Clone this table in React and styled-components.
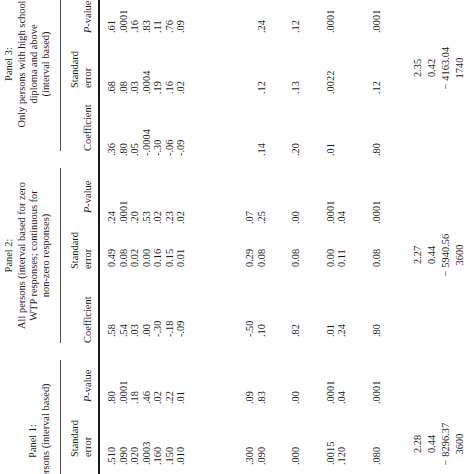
import React from "react";
import styled, { createGlobalStyle } from "styled-components";

const GlobalStyle = createGlobalStyle`
  html, body { margin: 0; padding: 0; background: #fff; overflow: hidden; }
`;

const Stage = styled.div`
  width: 474px;
  height: 474px;
  overflow: hidden;
  background: #fff;
`;

/* The printed table is turned a quarter turn counter-clockwise in the picture. */
const Sheet = styled.div`
  width: 537px;
  transform-origin: 0 0;
  transform: translate(0, 510px) rotate(-90deg);
  font-family: "Liberation Serif", "Times New Roman", serif;
  font-size: 10.4px;
  line-height: 12px;
  color: #1a1a1a;
`;

const TitleRow = styled.div`
  display: grid;
  grid-template-columns: 167px 192px 178px;
  align-items: end;
  padding-top: 3px;
`;

const PanelTitle = styled.div`
  margin-right: ${(p) => p.$gap}px;
  padding-right: ${(p) => p.$pad}px;
  padding-bottom: 8px;
  border-bottom: 1px solid #4a4a4a;
  text-align: center;
  white-space: nowrap;
`;

const PanelName = styled.div`
  margin-bottom: 1px;
`;

const headTemplate = "53px 55px 59px 74px 56px 62px 63px 55px 60px";
const bodyTemplate = "45px 61px 67px 70px 43px 68px 62px 61px 60px";

const ColumnHeadRow = styled.div`
  display: grid;
  grid-template-columns: ${headTemplate};
  align-items: end;
  padding: 7px 0 4px;
  line-height: 13px;
  border-bottom: 2px solid #1a1a1a;
`;

const ColumnHead = styled.div`
  white-space: nowrap;
`;

const Body = styled.div`
  padding-top: 6px;
`;

const DataRow = styled.div`
  display: grid;
  grid-template-columns: ${bodyTemplate};
  height: 11.5px;
  line-height: 11.5px;
  margin-top: ${(p) => p.$gap * 11.5}px;
`;

const Cell = styled.div`
  white-space: nowrap;
`;

const StatsRow = styled.div`
  display: grid;
  grid-template-columns: 167px 192px 178px;
  margin-top: 29px;
  line-height: 14px;
`;

const StatsBlock = styled.div`
  padding-right: ${(p) => p.$shift}px;
  text-align: center;
  white-space: nowrap;
`;

const Italic = styled.i`
  font-style: italic;
`;

const panels = [
  { name: "Panel 1:", lines: ["All persons (interval based)"], gap: 17, pad: 12 },
  {
    name: "Panel 2:",
    lines: [
      "All persons (interval based for zero",
      "WTP responses; continuous for",
      "non-zero responses)",
    ],
    gap: 17,
    pad: 0,
  },
  {
    name: "Panel 3:",
    lines: [
      "Only persons with high school",
      "diploma and above",
      "(interval based)",
    ],
    gap: 4,
    pad: 0,
  },
];

const rows = [
  { gap: 0, v: ["", ".510", ".80", ".58", "0.49", ".24", ".36", ".68", ".61"] },
  { gap: 0, v: ["", ".090", ".0001", ".54", "0.08", ".0001", ".80", ".08", ".0001"] },
  { gap: 0, v: ["", ".020", ".18", ".03", "0.02", ".20", ".05", ".03", ".16"] },
  { gap: 0, v: ["", ".0003", ".46", ".00", "0.00", ".53", "-.0004", ".0004", ".83"] },
  { gap: 0, v: ["", ".160", ".02", "-.30", "0.16", ".02", "-.30", ".19", ".11"] },
  { gap: 0, v: ["", ".150", ".22", "-.18", "0.15", ".23", "-.06", ".16", ".76"] },
  { gap: 0, v: ["", ".010", ".01", "-.09", "0.01", ".02", "-.09", ".02", ".09"] },
  { gap: 5, v: ["", ".300", ".09", "-.50", "0.29", ".07", "", "", ""] },
  { gap: 0, v: ["", ".090", ".83", ".10", "0.08", ".25", ".14", ".12", ".24"] },
  { gap: 2, v: ["", ".000", ".00", ".82", "0.08", ".00", ".20", ".13", ".12"] },
  { gap: 2, v: ["", ".0015", ".0001", ".01", "0.00", ".0001", ".01", ".0022", ".0001"] },
  { gap: 0, v: ["", ".120", ".04", ".24", "0.11", ".04", "", "", ""] },
  { gap: 2, v: ["", ".080", ".0001", ".80", "0.08", ".0001", ".80", ".12", ".0001"] },
];

const stats = [
  { shift: 35, v: ["2.28", "0.44", "\u2212 8296.37", "3600"] },
  { shift: 16, v: ["2.27", "0.44", "\u2212 5940.56", "3600"] },
  { shift: 12, v: ["2.35", "0.42", "\u2212 4163.04", "1740"] },
];

const PValue = () => (
  <>
    <Italic>P</Italic>-value
  </>
);

const headCells = [
  null,
  ["Standard", "error"],
  [<PValue key="p" />],
  ["Coefficient"],
  ["Standard", "error"],
  [<PValue key="p" />],
  ["Coefficient"],
  ["Standard", "error"],
  [<PValue key="p" />],
];

export default function App() {
  return (
    <>
      <GlobalStyle />
      <Stage>
        <Sheet>
          <TitleRow>
            {panels.map((p) => (
              <PanelTitle key={p.name} $gap={p.gap} $pad={p.pad}>
                <PanelName>{p.name}</PanelName>
                {p.lines.map((l) => (
                  <div key={l}>{l}</div>
                ))}
              </PanelTitle>
            ))}
          </TitleRow>
          <ColumnHeadRow>
            {headCells.map((c, i) => (
              <ColumnHead key={i}>
                {c && c.map((line, j) => <div key={j}>{line}</div>)}
              </ColumnHead>
            ))}
          </ColumnHeadRow>
          <Body>
            {rows.map((r, i) => (
              <DataRow key={i} $gap={r.gap}>
                {r.v.map((v, j) => (
                  <Cell key={j}>{v}</Cell>
                ))}
              </DataRow>
            ))}
            <StatsRow>
              {stats.map((s, i) => (
                <StatsBlock key={i} $shift={s.shift}>
                  {s.v.map((v) => (
                    <div key={v}>{v}</div>
                  ))}
                </StatsBlock>
              ))}
            </StatsRow>
          </Body>
        </Sheet>
      </Stage>
    </>
  );
}
